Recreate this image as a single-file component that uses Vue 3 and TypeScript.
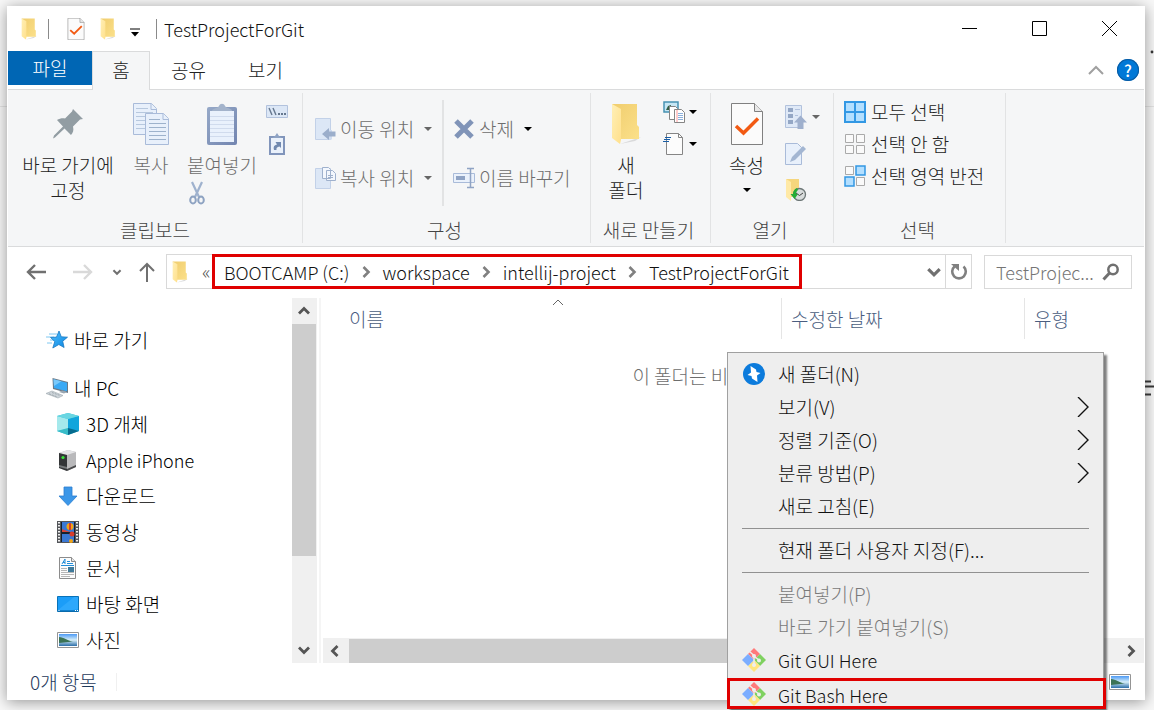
<script setup lang="ts">
interface TreeItem {
  label: string
  icon: string
  root?: boolean
}
interface MenuItem {
  label: string
  icon?: string
  submenu?: boolean
  disabled?: boolean
  marked?: boolean
}

const crumbs: string[] = ['BOOTCAMP (C:)', 'workspace', 'intellij-project', 'TestProjectForGit']

const tree: TreeItem[] = [
  { label: '바로 가기', icon: 'star', root: true },
  { label: '내 PC', icon: 'pc', root: true },
  { label: '3D 개체', icon: 'cube' },
  { label: 'Apple iPhone', icon: 'device' },
  { label: '다운로드', icon: 'download' },
  { label: '동영상', icon: 'video' },
  { label: '문서', icon: 'document' },
  { label: '바탕 화면', icon: 'desktop' },
  { label: '사진', icon: 'picture' },
]

const menu: MenuItem[][] = [
  [
    { label: '새 폴더(N)', icon: 'bolt' },
    { label: '보기(V)', submenu: true },
    { label: '정렬 기준(O)', submenu: true },
    { label: '분류 방법(P)', submenu: true },
    { label: '새로 고침(E)' },
  ],
  [{ label: '현재 폴더 사용자 지정(F)...' }],
  [
    { label: '붙여넣기(P)', disabled: true },
    { label: '바로 가기 붙여넣기(S)', disabled: true },
    { label: 'Git GUI Here', icon: 'git' },
    { label: 'Git Bash Here', icon: 'git', marked: true },
  ],
]

const isLatin = (text: string): boolean => /^[\x20-\x7e]+$/.test(text)
</script>

<template>
  <div class="desktop">
    <svg class="symbols" aria-hidden="true">
      <defs>
        <linearGradient id="gFolder" x1="0" y1="0" x2="1" y2="1">
          <stop offset="0" stop-color="#f0cd6e" /><stop offset="1" stop-color="#fbe08a" />
        </linearGradient>
        <linearGradient id="gFlap" x1="0" y1="0" x2="1" y2="1">
          <stop offset="0" stop-color="#ffefb5" /><stop offset="1" stop-color="#ffe08c" />
        </linearGradient>
        <linearGradient id="gBoard" x1="0" y1="0" x2="1" y2="1">
          <stop offset="0" stop-color="#96a9c8" /><stop offset="1" stop-color="#7285b0" />
        </linearGradient>
        <linearGradient id="gBlue" x1="0" y1="0" x2="1" y2="1">
          <stop offset="0" stop-color="#4fc1ff" /><stop offset="1" stop-color="#0a84e0" />
        </linearGradient>
        <linearGradient id="gSky" x1="0" y1="0" x2="0" y2="1">
          <stop offset="0" stop-color="#4d9af5" /><stop offset="0.5" stop-color="#d6eef7" /><stop offset="1" stop-color="#2c6ea8" />
        </linearGradient>
      </defs>
      <symbol id="folder" viewBox="0 0 30 42">
        <path d="M24 36l6-2-6 4-15 3z" fill="#d9dadb" />
        <path d="M1 1h25v21l2 2v12H9z" fill="url(#gFolder)" />
        <path d="M1 1l9 5v31l-1 4-8-6z" fill="url(#gFlap)" />
      </symbol>
      <symbol id="check" viewBox="0 0 32 42">
        <path d="M.5.5h23l8 8v33H.5z" fill="#fbfbfb" stroke="#808080" />
        <path d="M23.500.5v8h8" fill="#e8e8e8" stroke="#808080" />
        <path d="M5 23l7.500 7L27 15.500" fill="none" stroke="#f25a13" stroke-width="3.500" />
      </symbol>
      <symbol id="star" viewBox="0 0 22 22">
        <path d="M3 5h8M0 8h8M4 11h4M1 14h5" stroke="#7fc8f2" stroke-width="1" />
        <path d="M13 2l2.300 5.800 6.200.4-4.800 4 1.400 6.300-5.300-3-6 3.500 2-6.500-4.300-4 6-.4z" fill="url(#gBlue)" stroke="#1a78c2" stroke-width=".8" />
      </symbol>
      <symbol id="pc" viewBox="0 0 22 22">
        <path d="M6.500 1L22 5v11L7 12z" fill="#6b7986" />
        <path d="M7.500 2.300l13.500 3.500v8.500L8 11z" fill="#39a9f5" />
        <path d="M7.500 2.300l8 2L8 9z" fill="#79c9fb" />
        <path d="M13 15l5 1.500 2-1v-1l-4-1z" fill="#9aa6b0" />
        <path d="M0 16.500l6-2.500 11 4.500-5 2.500z" fill="#cdd4d9" stroke="#9da7ae" stroke-width=".6" />
        <path d="M3 16.800l8 3M6 15.500l8 3" stroke="#8e989f" stroke-width=".7" stroke-dasharray="2 1" />
      </symbol>
      <symbol id="cube" viewBox="0 0 22 22">
        <path d="M0 3l11-3 11 3v15l-11 4-11-4z" fill="#35c1d6" />
        <path d="M0 3l11 3v10L0 18z" fill="#a5e9ec" />
        <path d="M22 3L11 6v10l11 2z" fill="#12a5dc" />
        <path d="M0 18l11-3v7z" fill="#39bcc8" />
        <path d="M22 18l-11-3v7z" fill="#066b8e" />
        <path d="M0 3l11-3 11 3-11 3z" fill="#69d6e2" />
      </symbol>
      <symbol id="device" viewBox="0 0 22 22">
        <path d="M2 4l9-3 8 2v15l-9 4-8-3z" fill="#b9b9bb" />
        <path d="M2 4l9-3 8 2-9 3z" fill="#e4e4e6" />
        <path d="M2 4l8 2v16l-8-3z" fill="#333537" />
        <path d="M2 16l8 2v2l-8-2z" fill="#75787a" />
        <path d="M10 20l9-4v2l-9 4z" fill="#4a4b4d" />
        <circle cx="6" cy="8.500" r="1.600" fill="#39e639" />
      </symbol>
      <symbol id="download" viewBox="0 0 22 22">
        <path d="M7 2h8v9h5l-9 9.500L2 11h5z" fill="#3c97e8" stroke="#2b7fd0" stroke-width=".8" />
      </symbol>
      <symbol id="video" viewBox="0 0 22 22">
        <path d="M0 0h22v22H0z" fill="#54565a" />
        <path d="M2 1v21M20 1v21" stroke="#f0f0f0" stroke-width="2" stroke-dasharray="1.500 1.500" />
        <path d="M4 1h14v20H4z" fill="#16202e" />
        <path d="M5 1h12v10H5zM5 13h12v8H5z" fill="#3a78d4" />
        <circle cx="13" cy="5.500" r="3.500" fill="#f2a516" />
        <path d="M12 2h2v7h-2z" fill="#d93d2c" />
        <path d="M5 8l5 2 3 1H5z" fill="#d84436" />
        <circle cx="15" cy="13" r="2.500" fill="#d93d2c" />
        <circle cx="14" cy="20" r="2" fill="#f2a516" />
      </symbol>
      <symbol id="document" viewBox="0 0 22 22">
        <path d="M2.500.5h12l4 4v17h-16z" fill="#fcfcfc" stroke="#8c8c8c" />
        <path d="M14.500.5v4h4" fill="#e8e8e8" stroke="#8c8c8c" />
        <path d="M5 7l3-5v5M6 5.500h2M10 4.500h3M10 6.500h6M4 8.500h13" stroke="#258ed8" fill="none" />
        <path d="M4 11.500h6M4 13.500h6M4 15.500h13M4 17.500h13M4 19.500h9" stroke="#a3a3a3" stroke-width=".8" />
        <path d="M11 10h6v5h-6z" fill="#3f7a9a" />
      </symbol>
      <symbol id="desktop" viewBox="0 0 22 22">
        <path d="M.5 3.500h21v15H.5z" fill="#1b9df8" stroke="#0972b8" />
        <path d="M1 17L17 4h4v12l-5 1z" fill="#3db0ff" opacity=".55" />
        <path d="M1 18h20" stroke="#0b63a0" />
        <path d="M1.500 17.500h1M18 17.500h3" stroke="#fff" stroke-dasharray="1 1" />
      </symbol>
      <symbol id="picture" viewBox="0 0 22 22">
        <path d="M.5 3.500h21v15H.5z" fill="#fff" stroke="#949494" />
        <path d="M2 5h18v12H2z" fill="url(#gSky)" />
        <path d="M2 8c5 0 8 4 14 4.500L2 14z" fill="#3c7355" />
      </symbol>
      <symbol id="bolt" viewBox="0 0 22 22">
        <circle cx="11" cy="11" r="11" fill="#0c7bdc" />
        <path d="M7.500 3l5.500 3.500 .5 2.500 4 1-3.500 2.500.5 6.500-5.500-3.500-.5-2.500-4-1 3.500-2.500z" fill="#fff" />
      </symbol>
      <symbol id="git" viewBox="0 0 24 24">
        <path d="M12 0l6 6-6 6-6-6z" fill="#ff7a7a" />
        <path d="M24 12l-6 6-6-6 6-6z" fill="#7fd160" />
        <path d="M12 24l-6-6 6-6 6 6z" fill="#ffe57f" />
        <path d="M0 12l6-6 6 6-6 6z" fill="#7badff" />
        <path d="M7.500 3.500l4.500 4v11M11 7.500l6 4.500" fill="none" stroke="#eee" stroke-width="1.400" />
        <circle cx="12" cy="8" r="2" fill="#eee" />
        <circle cx="17" cy="12.500" r="2" fill="#eee" />
        <circle cx="12" cy="17" r="2" fill="#eee" />
      </symbol>
      <symbol id="caret" viewBox="0 0 8 4"><path d="M0 0h8L4 4z" fill="currentColor" /></symbol>
      <symbol id="chevron" viewBox="0 0 14 14">
        <path d="M2 4.500l5 5 5-5" fill="none" stroke="currentColor" stroke-width="2.800" />
      </symbol>
    </svg>

    <svg class="behind" viewBox="0 0 9 350" aria-hidden="true">
      <circle cx="7" cy="2" r="1.400" fill="#333" />
      <path d="M0 331.500h6M0 336.500h9M0 344.500h6" stroke="#333" stroke-width="2" />
    </svg>

    <main class="window">
      <header class="titlebar">
        <div class="quick">
          <svg class="mini-folder"><use href="#folder" /></svg>
          <i class="bar"></i>
          <button type="button" class="q-check" aria-label="속성"><svg><use href="#check" /></svg></button>
          <button type="button" class="q-folder" aria-label="새 폴더"><svg class="mini-folder"><use href="#folder" /></svg></button>
          <button type="button" class="q-more" aria-label="사용자 지정">
            <svg viewBox="0 0 10 9"><path d="M0 1h10" stroke="#000" stroke-width="1" /><path d="M1 4h8L5 8.500z" /></svg>
          </button>
          <i class="bar"></i>
        </div>
        <h1>TestProjectForGit</h1>
        <div class="controls">
          <button type="button" aria-label="최소화"><svg viewBox="0 0 15 15"><path d="M0 7.500h15" /></svg></button>
          <button type="button" aria-label="최대화"><svg viewBox="0 0 15 15"><path d="M.5.5h14v14H.5z" /></svg></button>
          <button type="button" aria-label="닫기"><svg viewBox="0 0 15 15"><path d="M0 0l15 15M15 0L0 15" /></svg></button>
        </div>
      </header>

      <div class="tabs">
        <button type="button" class="tab file">파일</button>
        <button type="button" class="tab active">홈</button>
        <button type="button" class="tab">공유</button>
        <button type="button" class="tab">보기</button>
        <div class="tab-tools">
          <button type="button" aria-label="리본 축소"><svg class="fold" viewBox="0 0 16 10"><path d="M1 9l7-7 7 7" /></svg></button>
          <button type="button" class="help" aria-label="도움말">?</button>
        </div>
      </div>

      <section class="ribbon">
        <div class="group g-clip">
          <div class="tools">
            <button type="button" class="big pin">
              <svg viewBox="0 0 32 42"><path d="M21 6l10 10-3 .5-7 7c1 4 0 6-2 8.500l-6.500-6.500L3 34.500l-2 1 1-3 9-9L5 17c2.500-1.500 5.500-2 8-1.500l7-7z" fill="#929da3" /></svg>
              <span>바로 가기에<br />고정</span>
            </button>
            <button type="button" class="big off copy">
              <svg viewBox="0 0 36 42">
                <g fill="#e8f0fb" stroke="#a9bbd9">
                  <path d="M.5.5h18l5 5v26H.5z" /><path d="M18 .5v6h6" />
                  <path d="M3 5.500h12M3 9.500h17M3 13.500h9M3 17.500h9M3 21.500h9M3 25.500h9" stroke="#b7c8de" />
                  <path d="M12.500 10.500h18l5 5v26h-23z" /><path d="M30 10.500v6h6" />
                  <path d="M16 16.500h11M16 20.500h17M16 24.500h17M16 28.500h17M16 32.500h17M16 36.500h17" stroke="#9db2cc" />
                </g>
              </svg>
              <span>복사</span>
            </button>
            <div class="paste">
              <button type="button" class="big off">
                <svg viewBox="0 0 32 42">
                  <rect x="1" y="4" width="30" height="38" rx="2" fill="url(#gBoard)" />
                  <path d="M4 8h24v31H4z" fill="#e9f1fc" />
                  <path d="M4 13.500h24M4 17.500h24M4 21.500h24M4 25.500h24M4 29.500h24M4 33.500h24" stroke="#d0dbed" />
                  <path d="M6 8c0-3 5-2 7-5 1-3 5-3 6 0 2 3 7 2 7 5z" fill="#a3b3cb" />
                </svg>
                <span>붙여넣기</span>
              </button>
              <button type="button" class="cut" aria-label="잘라내기">
                <svg viewBox="0 0 16 24">
                  <path d="M3 1l7 15M13 1L6 16" stroke="#9fb2ce" stroke-width="2.200" />
                  <g fill="none" stroke="#8ea3c2" stroke-width="2"><ellipse cx="4" cy="19" rx="2.800" ry="3.500" /><ellipse cx="12" cy="19" rx="2.800" ry="3.500" /></g>
                </svg>
              </button>
            </div>
            <div class="pair">
              <button type="button" aria-label="경로 복사">
                <svg width="22" height="14" viewBox="0 0 22 14"><path d="M.5.5h21v12H.5z" fill="#dce7f6" stroke="#b2c2dd" /><path d="M3 3l3 7M7 3l3 7" stroke="#66788f" stroke-width="1.400" /><path d="M12 9h2m1 0h2m1 0h2" stroke="#66788f" stroke-width="2" /></svg>
              </button>
              <button type="button" aria-label="바로 가기 붙여넣기">
                <svg width="16" height="22" viewBox="0 0 16 22"><path d="M1 4h14v17H1z" fill="#eaf1fb" stroke="#8195bb" stroke-width="2" /><path d="M3 5l3-2 2-3 2 3 3 2z" fill="#8fa3c4" /><path d="M5 17c-1-3 0-5 3-5.500L6.500 9H12v6l-1.500-1.500C8 14 7 15 7.500 17z" fill="#7189b0" /></svg>
              </button>
            </div>
          </div>
          <h2>클립보드</h2>
        </div>

        <div class="group g-org">
          <div class="tools">
            <div class="rows">
              <button type="button" class="row off">
                <svg width="22" height="22" viewBox="0 0 22 22"><path d="M1.500.5h15v21h-15z" fill="#dce7f6" stroke="#c2d1e8" /><path d="M15 12h3v9.500h-3z" fill="#d0ddf0" /><path d="M8 16l7-6v3.500h6.500v5H15V22z" fill="#9baecb" /></svg>
                <span>이동 위치</span><svg class="caret"><use href="#caret" /></svg>
              </button>
              <button type="button" class="row off">
                <svg width="22" height="22" viewBox="0 0 22 22"><path d="M1.500 1.500h15v20h-15z" fill="#dce7f6" stroke="#c2d1e8" /><g fill="#f3f7fd" stroke="#9fb1cd"><path d="M8.500.5h6l2 2v9h-8zM12.500 3.500h6l3 3v7h-9z" /><path d="M14 8.500h5M14 10.500h5" /></g></svg>
                <span>복사 위치</span><svg class="caret"><use href="#caret" /></svg>
              </button>
            </div>
            <i class="split"></i>
            <div class="rows">
              <button type="button" class="row off">
                <svg width="22" height="22" viewBox="0 0 22 22"><path d="M3 3l16 16M19 3L3 19" stroke="#8094b8" stroke-width="5" /></svg>
                <span>삭제</span><svg class="caret black"><use href="#caret" /></svg>
              </button>
              <button type="button" class="row off">
                <svg width="22" height="22" viewBox="0 0 22 22"><path d="M.5 6.500h21v9H.5z" fill="#eaf1fb" stroke="#a9bbd9" /><path d="M3 9h9v4H3z" fill="#8fa3c4" /><path d="M14 1.500h7M14 20.500h7M17.500 1v20" stroke="#8fa3c4" stroke-width="1.500" /></svg>
                <span>이름 바꾸기</span>
              </button>
            </div>
          </div>
          <h2>구성</h2>
        </div>

        <div class="group g-new">
          <div class="tools">
            <button type="button" class="big">
              <svg class="folder"><use href="#folder" /></svg>
              <span>새<br />폴더</span>
            </button>
            <div class="pair">
              <button type="button" aria-label="새 항목">
                <svg width="22" height="22" viewBox="0 0 22 22"><path d="M1 1h14v10H1z" fill="#c6e6f4" stroke="#4793b3" stroke-width="1.500" /><path d="M3 9l2-4 3-1v5z" fill="#315f45" /><g fill="#fff" stroke="#858585"><path d="M6.500 5.500h6l2 2v11h-8z" /><path d="M11.500 8.500h7l3 3v10h-10z" /></g><path d="M14 9v12" stroke="#f99" /><path d="M15 12.500h5M15 14.500h5M15 16.500h5M15 18.500h5" stroke="#8bb1dd" /></svg>
                <svg class="caret black"><use href="#caret" /></svg>
              </button>
              <button type="button" aria-label="빠른 연결">
                <svg width="22" height="22" viewBox="0 0 22 22"><path d="M3.500.5h12l4 4v17h-16z" fill="#fcfcfc" stroke="#858585" /><path d="M15.500.5v4h4" fill="none" stroke="#858585" /><path d="M2 4.500h6M1 6.500h6M0 8.500h6" stroke="#1a5ea6" stroke-width="1.200" /></svg>
                <svg class="caret black"><use href="#caret" /></svg>
              </button>
            </div>
          </div>
          <h2>새로 만들기</h2>
        </div>

        <div class="group g-open">
          <div class="tools">
            <button type="button" class="big">
              <svg viewBox="0 0 32 42"><use href="#check" /></svg>
              <span>속성</span><svg class="caret black"><use href="#caret" /></svg>
            </button>
            <div class="pair">
              <button type="button" aria-label="열기">
                <svg width="22" height="24" viewBox="0 0 22 24"><path d="M.5.5h16v22H.5z" fill="#dfe9f7" stroke="#b2c2dd" /><path d="M3 3h5v4H3zM3 9h5v4H3zM3 15h5v4H3z" fill="#94a7c5" /><path d="M10 4.500h5M10 10.500h3" stroke="#b2c2dd" /><path d="M15.500 10.500l6.500 7h-3.500V24h-6v-6.500H9z" fill="#9fb0cd" /></svg>
                <svg class="caret"><use href="#caret" /></svg>
              </button>
              <button type="button" aria-label="편집">
                <svg width="22" height="22" viewBox="0 0 22 22"><path d="M.5.5h12l4 4v17H.5z" fill="#e8f0fb" stroke="#a9bbd9" /><path d="M5 19l2-5L18 3l3 3L10 17z" fill="#a3b6d2" /></svg>
              </button>
              <button type="button" aria-label="히스토리">
                <svg width="22" height="22" viewBox="0 0 22 22"><path d="M1 0h13v18H6z" fill="#f5d67d" /><path d="M1 0l5 3v19l-5-4z" fill="#ffe9a6" /><circle cx="14.500" cy="15.500" r="6" fill="#d8dcdc" stroke="#6d7777" stroke-width="1.300" /><path d="M11 14l3.500 2.500L18 14" fill="none" stroke="#444" /><path d="M12 9c-3 1-4 4-4 6H5.500l4 5 3.500-5h-2c0-2 1-3 2-4z" fill="#25ac36" /></svg>
              </button>
            </div>
          </div>
          <h2>열기</h2>
        </div>

        <div class="group g-select">
          <div class="tools">
            <button type="button" class="row">
              <svg width="22" height="22" viewBox="0 0 22 22"><path d="M1 1h20v20H1zM11 1v20M1 11h20" fill="#b3dfff" stroke="#3398e4" stroke-width="2" /></svg>
              <span>모두 선택</span>
            </button>
            <button type="button" class="row">
              <svg width="22" height="22" viewBox="0 0 22 22"><path d="M1.500 1.500h8v8h-8zM12.500 1.500h8v8h-8zM1.500 12.500h8v8h-8zM12.500 12.500h8v8h-8z" fill="#fafafa" stroke="#aaa" /></svg>
              <span>선택 안 함</span>
            </button>
            <button type="button" class="row">
              <svg width="22" height="22" viewBox="0 0 22 22"><path d="M1.500 1.500h8v8h-8zM12.500 12.500h8v8h-8z" fill="#fafafa" stroke="#aaa" /><path d="M12 1h9v9h-9zM1 12h9v9H1z" fill="#b3dfff" stroke="#3398e4" stroke-width="1.500" /></svg>
              <span>선택 영역 반전</span>
            </button>
          </div>
          <h2>선택</h2>
        </div>
      </section>

      <div class="navbar">
        <div class="nav-buttons">
          <button type="button" aria-label="뒤로"><svg width="20" height="16" viewBox="0 0 20 16"><path d="M20 8H2M9 1L2 8l7 7" fill="none" stroke="#707070" stroke-width="2.400" /></svg></button>
          <button type="button" aria-label="앞으로" disabled><svg width="20" height="16" viewBox="0 0 20 16"><path d="M0 8h18M11 1l7 7-7 7" fill="none" stroke="#d9d9d9" stroke-width="2.400" /></svg></button>
          <button type="button" class="recent" aria-label="최근 위치"><svg width="10" height="10"><use href="#chevron" /></svg></button>
          <button type="button" aria-label="위로"><svg width="16" height="20" viewBox="0 0 16 20"><path d="M8 20V2M1 9l7-7 7 7" fill="none" stroke="#707070" stroke-width="2" /></svg></button>
        </div>
        <div class="address">
          <svg class="mini-folder"><use href="#folder" /></svg>
          <span class="more">«</span>
          <nav class="crumbs" aria-label="경로">
            <template v-for="(crumb, i) in crumbs" :key="crumb">
              <svg v-if="i > 0" viewBox="0 0 9 12"><path d="M1.500 1l5 5-5 5" fill="none" stroke="#808080" stroke-width="2.600" /></svg>
              <a href="#">{{ crumb }}</a>
            </template>
          </nav>
          <span class="fill"></span>
          <button type="button" class="drop" aria-label="이전 위치"><svg width="16" height="16"><use href="#chevron" /></svg></button>
          <button type="button" class="refresh" aria-label="새로 고침">
            <svg width="18" height="18" viewBox="0 0 18 18"><path d="M4.500 3.500a6.800 6.800 0 1 0 9 0" fill="none" stroke="#808080" stroke-width="2.600" /><path d="M1 1h8v7z" fill="#808080" /></svg>
          </button>
        </div>
        <label class="search">
          <input type="text" placeholder="TestProjec..." aria-label="TestProjectForGit 검색" />
          <svg width="18" height="18" viewBox="0 0 18 18"><circle cx="11" cy="6.500" r="4.700" fill="none" stroke="#707070" stroke-width="2.500" /><path d="M7.500 10L1.500 16.500" stroke="#707070" stroke-width="3" /></svg>
        </label>
      </div>

      <div class="content">
        <nav class="tree" aria-label="탐색 창">
          <a v-for="item in tree" :key="item.label" href="#" :class="{ root: item.root, latin: isLatin(item.label) }">
            <svg><use :href="'#' + item.icon" /></svg>{{ item.label }}
          </a>
        </nav>
        <div class="vscroll">
          <svg class="up"><use href="#chevron" /></svg>
          <i></i>
          <svg><use href="#chevron" /></svg>
        </div>
        <section class="files">
          <div class="columns">
            <button type="button" class="c-name">
              <svg class="sort" viewBox="0 0 12 7"><path d="M1 6l5-5 5 5" fill="none" stroke="#666" /></svg>이름
            </button>
            <button type="button" class="c-date">수정한 날짜</button>
            <button type="button" class="c-type">유형</button>
          </div>
          <p class="empty">이 폴더는 비어 있습니다.</p>
          <div class="hscroll">
            <svg class="left"><use href="#chevron" /></svg>
            <i></i>
            <svg class="right"><use href="#chevron" /></svg>
          </div>
        </section>
      </div>

      <footer class="status">
        <span>0개 항목</span>
        <svg width="22" height="22"><use href="#picture" /></svg>
      </footer>
    </main>

    <div class="menu" role="menu">
      <div v-for="(section, s) in menu" :key="s" class="section">
        <button
          v-for="item in section"
          :key="item.label"
          type="button"
          role="menuitem"
          :disabled="item.disabled"
          :class="{ marked: item.marked, latin: isLatin(item.label) }"
        >
          <span class="slot"><svg v-if="item.icon" :class="item.icon"><use :href="'#' + item.icon" /></svg></span>
          <span class="text">{{ item.label }}</span>
          <svg v-if="item.submenu" class="sub" viewBox="0 0 12 20"><path d="M1 0l10 10L1 20" /></svg>
        </button>
      </div>
    </div>
  </div>
</template>

<style>
body {
  background: #f3f3f3;
}
</style>

<style scoped>
.desktop {
  position: relative;
  display: flex;
  min-height: 100vh;
  box-sizing: border-box;
  padding: 6px 9px 10px 7px;
  overflow: hidden;
  background: linear-gradient(#f8f8f8 106px, #e4e4e4 106px, #e4e4e4 107px, #f8f8f8 107px);
  color: #222;
  font-family: "Noto Sans CJK KR", "Noto Sans", sans-serif;
  font-size: 19px;
  font-weight: 300;
  line-height: 24px;
}
.symbols {
  position: absolute;
  width: 0;
  height: 0;
}
.behind {
  position: absolute;
  z-index: 1;
  top: 50px;
  right: 0;
  width: 9px;
  height: 350px;
}
button {
  display: flex;
  align-items: center;
  padding: 0;
  border: 0;
  background: none;
  color: inherit;
  font: inherit;
  white-space: nowrap;
}
a {
  color: inherit;
  text-decoration: none;
}
svg {
  flex: none;
}
h1,
h2,
p {
  margin: 0;
  font-size: inherit;
  font-weight: inherit;
}
.window {
  flex: 1;
  min-width: 0;
  display: flex;
  flex-direction: column;
  padding: 0 1px;
  background: #fff;
  box-shadow: 0 2px 14px rgba(0, 0, 0, 0.4);
}

.titlebar {
  display: flex;
  align-items: center;
  height: 45px;
}
.quick {
  display: flex;
  align-items: center;
  padding-left: 13px;
}
.mini-folder {
  width: 16px;
  height: 22px;
}
.bar {
  width: 1px;
  height: 20px;
  margin-left: 11px;
  background: #8a8a8a;
}
.q-check {
  margin-left: 18px;
}
.q-check svg {
  width: 18px;
  height: 22px;
}
.q-folder {
  margin-left: 15px;
}
.q-more {
  margin-left: 14px;
  padding-top: 8px;
}
.q-more svg {
  width: 10px;
  height: 9px;
}
.q-more + .bar {
  margin-left: 16px;
}
h1 {
  flex: 1;
  margin-left: 7px;
  color: #111;
  font-size: 18px;
}
.controls {
  display: flex;
}
.controls button {
  justify-content: center;
  width: 70px;
  height: 44px;
}
.controls svg {
  width: 15px;
  height: 15px;
  fill: none;
  stroke: #000;
}

.tabs {
  display: flex;
  align-items: flex-start;
  height: 39px;
  box-shadow: inset 0 -1px #dadbdc;
}
.tab {
  justify-content: center;
  box-sizing: border-box;
  width: 77px;
  height: 39px;
  padding-bottom: 2px;
}
.tab.file {
  width: 84px;
  height: 34px;
  padding: 0;
  background: #0066b4;
  color: #fff;
}
.tab.active {
  width: 58px;
  border: 1px solid #dadbdc;
  border-bottom: 0;
  background: #f5f6f7;
}
.tab-tools {
  display: flex;
  align-items: center;
  gap: 13px;
  height: 38px;
  margin-left: auto;
  padding-right: 5px;
}
.fold {
  width: 16px;
  height: 10px;
  fill: none;
  stroke: #a0a0a0;
  stroke-width: 2;
}
.help {
  justify-content: center;
  width: 22px;
  height: 22px;
  border-radius: 50%;
  background: #0078d7;
  box-shadow: inset 0 0 0 1px #0a5ca3;
  color: #fff;
  font-size: 16px;
  font-weight: 500;
}

.ribbon {
  display: flex;
  height: 157px;
  box-sizing: border-box;
  padding-top: 3px;
  border-bottom: 1px solid #dadbdc;
  background: #f5f6f7;
}
.group {
  display: flex;
  flex-direction: column;
  box-sizing: border-box;
  height: 150px;
  padding-bottom: 1px;
  border-right: 1px solid #e2e3e4;
}
.tools {
  flex: 1;
  display: flex;
  align-items: flex-start;
}
h2 {
  padding-right: 4px;
  color: #444;
  text-align: center;
}
.g-clip h2 {
  padding-right: 0;
}
.g-clip {
  width: 295px;
}
.g-org {
  width: 288px;
}
.g-new {
  width: 120px;
}
.g-open {
  width: 123px;
}
.g-select {
  width: 172px;
}
.big {
  flex-direction: column;
  align-items: center;
  padding-top: 10px;
  gap: 7px;
  line-height: 25px;
}
.big > svg {
  width: 32px;
  height: 42px;
}
.big > svg.caret {
  margin-top: 4px;
}
.caret,
.big > .caret {
  width: 8px;
  height: 4px;
  color: #666;
}
.caret.black {
  color: #000;
}
.off {
  color: #6d6d6d;
}
.pin {
  width: 120px;
}
.copy {
  width: 46px;
}
.copy > svg {
  width: 36px;
}
.paste {
  width: 96px;
}
.paste .big {
  width: 100%;
}
.cut {
  margin: 4px 0 0 15px;
}
.cut svg {
  width: 16px;
  height: 24px;
}
.pair {
  display: flex;
  flex-direction: column;
  align-items: center;
  gap: 10px;
}
.g-clip .pair {
  gap: 14px;
  padding-top: 12px;
  margin-left: -4px;
}
.pair button {
  gap: 4px;
}
.rows {
  display: flex;
  flex-direction: column;
  gap: 25px;
  padding-top: 24px;
}
.row {
  gap: 4px;
}
.row .caret {
  margin-left: 6px;
}
.g-org .tools {
  padding-left: 11px;
}
.g-org .rows:first-child {
  width: 128px;
}
.split {
  width: 2px;
  height: 106px;
  margin: 7px 9px 0 0;
  background: #e2e3e4;
}
.g-new .big {
  width: 70px;
}
.g-new .pair {
  padding: 8px 0 0 2px;
}
.g-open .big {
  width: 71px;
}
.g-open .pair {
  align-items: flex-start;
  gap: 14px;
  padding: 12px 0 0 3px;
}
.g-open .pair button {
  gap: 5px;
}
.g-select .tools {
  flex-direction: column;
  gap: 8px;
  padding: 7px 0 0 10px;
}
.g-select .row {
  gap: 5px;
}

.navbar {
  display: flex;
  align-items: center;
  gap: 12px;
  padding: 7px 12px 9px 18px;
}
.nav-buttons {
  display: flex;
  align-items: center;
  width: 128px;
  gap: 27px;
}
.nav-buttons .recent {
  margin: 0 -10px 0 -8px;
}
.recent,
.drop {
  color: #707070;
}
.address {
  flex: 1;
  min-width: 0;
  display: flex;
  align-items: center;
  box-sizing: border-box;
  height: 35px;
  border: 1px solid #d9d9d9;
  padding-left: 5px;
}
.more {
  width: 11px;
  margin-left: 14px;
  padding-bottom: 2px;
  color: #555;
}
.crumbs {
  display: flex;
  align-items: center;
  gap: 12px;
  box-sizing: border-box;
  height: 35px;
  margin: 0 0 0 -1px;
  padding: 0 10px 0 9px;
  border: 3px solid #e00000;
  color: #111;
  font-size: 18px;
  white-space: nowrap;
}
.crumbs svg {
  width: 9px;
  height: 12px;
}
.fill {
  flex: 1;
}
.drop {
  margin-right: 3px;
}
.refresh {
  justify-content: center;
  width: 26px;
  height: 33px;
  border-left: 1px solid #d9d9d9;
}
.search {
  display: flex;
  align-items: center;
  box-sizing: border-box;
  width: 148px;
  height: 34px;
  padding: 0 11px;
  border: 1px solid #d9d9d9;
}
.search input {
  flex: 1;
  min-width: 0;
  padding: 0;
  border: 0;
  outline: 0;
  background: none;
  color: #222;
  font: inherit;
  font-size: 18px;
}
.search input::placeholder {
  color: #757575;
  opacity: 1;
}

.content {
  flex: 1;
  display: flex;
  min-height: 365px;
}
.tree {
  width: 284px;
  padding-top: 24px;
  color: #000;
}
.tree a {
  display: flex;
  align-items: center;
  gap: 7px;
  height: 36px;
  padding-left: 49px;
}
.tree a.root {
  gap: 6px;
  padding-left: 38px;
}
.tree a.root:first-child {
  margin-bottom: 12px;
}
.tree svg {
  width: 22px;
  height: 22px;
}
.tree .latin,
.menu .latin {
  font-size: 18px;
}
.vscroll {
  display: flex;
  flex-direction: column;
  align-items: flex-start;
  justify-content: space-between;
  width: 25px;
  background: #f0f0f0;
  color: #555;
}
.vscroll svg,
.hscroll svg {
  width: 14px;
  height: 14px;
  margin: 6px 5px;
}
.vscroll .up {
  transform: rotate(180deg);
}
.vscroll i {
  width: 24px;
  height: 64%;
  margin-bottom: 81px;
  background: #cdcdcd;
}
.files {
  flex: 1;
  min-width: 0;
  display: flex;
  flex-direction: column;
  margin-left: 2px;
  border-left: 2px solid #f5f5f5;
}
.columns {
  display: flex;
  height: 41px;
  padding-left: 2px;
  color: #4a5d80;
}
.columns button {
  padding: 1px 0 0 9px;
  border-left: 1px solid #e5e5e5;
}
.columns .c-name {
  position: relative;
  flex: 1;
  padding-left: 26px;
  border: 0;
}
.sort {
  position: absolute;
  top: 1px;
  left: 50%;
  width: 12px;
  height: 7px;
}
.columns .c-date {
  width: 243px;
}
.columns .c-type {
  width: 120px;
}
.empty {
  flex: 1;
  padding: 25px 8px 0 0;
  color: #6d6d6d;
  text-align: center;
}
.hscroll {
  display: flex;
  align-items: center;
  height: 25px;
  margin-left: 2px;
  background: #f0f0f0;
  color: #555;
}
.hscroll i {
  width: 72%;
  height: 24px;
  margin-left: 2px;
  background: #cdcdcd;
}
.left {
  transform: rotate(90deg);
}
.right {
  transform: rotate(-90deg);
}
.hscroll svg.right {
  margin: 6px 6px 6px auto;
}
.status {
  display: flex;
  align-items: center;
  justify-content: space-between;
  height: 37px;
  padding: 0 13px 0 22px;
  color: #1e395b;
}
.status span {
  padding-right: 19px;
  border-right: 1px solid #f0f0f0;
  line-height: 18px;
}

.menu {
  position: absolute;
  z-index: 2;
  top: 352px;
  right: 50px;
  width: 377px;
  box-sizing: border-box;
  padding-top: 6px;
  border: 1px solid #a0a0a0;
  border-bottom: 0;
  background: #eee;
  box-shadow: 3px 3px 2px rgba(0, 0, 0, 0.5);
  color: #111;
}
.section + .section::before {
  content: "";
  display: block;
  height: 1px;
  margin: 4px 14px 6px;
  background: #919191;
}
.menu button {
  box-sizing: border-box;
  width: 100%;
  height: 33px;
  padding: 0 14px 3px;
}
.menu button:disabled {
  color: #7a7a7a;
}
.menu .marked {
  width: 379px;
  height: 31px;
  margin-left: -1px;
  padding: 0 12px;
  border: 3px solid #e00000;
}
.marked .text {
  padding-top: 2px;
}
.slot {
  display: flex;
  width: 36px;
}
.slot svg {
  width: 24px;
  height: 24px;
}
.slot .bolt {
  width: 22px;
  height: 22px;
  margin-left: 1px;
}
.text {
  flex: 1;
  text-align: left;
}
.sub {
  width: 12px;
  height: 20px;
  fill: none;
  stroke: #111;
  stroke-width: 1.4;
}
</style>
